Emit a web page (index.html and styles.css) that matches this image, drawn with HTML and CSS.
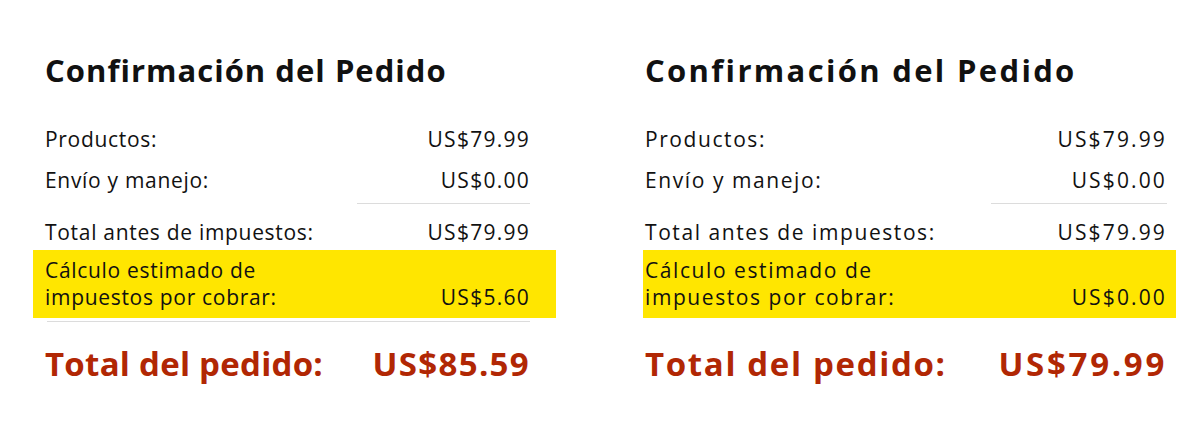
FILE: index.html
```html
<!DOCTYPE html>
<html lang="es">
<head>
<meta charset="utf-8">
<title>Confirmación del Pedido</title>
<link rel="stylesheet" href="styles.css">
</head>
<body>
<main class="page">
  <section class="panel panel-a">
    <h2 class="title">Confirmación del Pedido</h2>
    <div class="row row-first"><span>Productos:</span><span class="amount">US$79.99</span></div>
    <div class="row row-second"><span>Envío y manejo:</span><span class="amount">US$0.00</span></div>
    <div class="divider"></div>
    <div class="row row-subtotal"><span>Total antes de impuestos:</span><span class="amount">US$79.99</span></div>
    <div class="tax">
      <span>Cálculo estimado de<br>impuestos por cobrar:</span><span class="amount">US$5.60</span>
    </div>
    <div class="rule"></div>
    <div class="grand"><span>Total del pedido:</span><span class="amount">US$85.59</span></div>
  </section>
  <section class="panel panel-b">
    <h2 class="title">Confirmación del Pedido</h2>
    <div class="row row-first"><span>Productos:</span><span class="amount">US$79.99</span></div>
    <div class="row row-second"><span>Envío y manejo:</span><span class="amount">US$0.00</span></div>
    <div class="divider"></div>
    <div class="row row-subtotal"><span>Total antes de impuestos:</span><span class="amount">US$79.99</span></div>
    <div class="tax">
      <span>Cálculo estimado de<br>impuestos por cobrar:</span><span class="amount">US$0.00</span>
    </div>
    <div class="rule rule-hidden"></div>
    <div class="grand"><span>Total del pedido:</span><span class="amount">US$79.99</span></div>
  </section>
</main>
</body>
</html>
```
FILE: styles.css
```css
* { box-sizing: border-box; }
html, body { margin: 0; padding: 0; background: #fff; }
body {
  font-family: "Open Sans", "Noto Sans", sans-serif;
  color: #111;
}
.page {
  display: flex;
  gap: 87px;
  padding: 50px 0 0 33px;
}
.panel {
  display: flex;
  flex-direction: column;
  --ls: 0em;
}
.panel-a { width: 523px; --pl: 12px; --pr: 26px; }
.panel-b { width: 533px; --pl: 2px; --pr: 9px; --ls: 0.042em; }

.title {
  margin: 0 0 36px;
  padding-left: var(--pl);
  font-size: 31px;
  line-height: 40px;
  font-weight: 700;
  color: #111;
  letter-spacing: calc(0.033em + var(--ls));
}
.row, .tax, .grand {
  display: flex;
  justify-content: space-between;
  padding-left: var(--pl);
  padding-right: var(--pr);
}
.row, .tax {
  font-size: 21px;
  line-height: 27px;
  font-weight: 500;
  letter-spacing: calc(0.033em + var(--ls));
}
.row .amount, .tax .amount {
  letter-spacing: calc(0.06em + var(--ls));
}
.row-second { margin-top: 14px; }
.divider {
  margin: 9px var(--pr) 0 auto;
  width: 33%;
  height: 1px;
  background: #dcdcdc;
}
.row-subtotal { margin-top: 15px; }
.tax {
  margin-top: 4px;
  background: #ffe600;
  padding-top: 7px;
  padding-bottom: 7px;
  align-items: flex-end;
}
.rule {
  margin: 3px var(--pr) 0 calc(var(--pl) + 2px);
  height: 1px;
  background: #dcdcdc;
}
.rule-hidden { background: transparent; }
.grand {
  margin-top: 22px;
  font-size: 33px;
  line-height: 40px;
  font-weight: 700;
  color: #b12704;
  letter-spacing: calc(0.008em + var(--ls));
}
.grand .amount {
  letter-spacing: calc(0.04em + var(--ls));
}
```
